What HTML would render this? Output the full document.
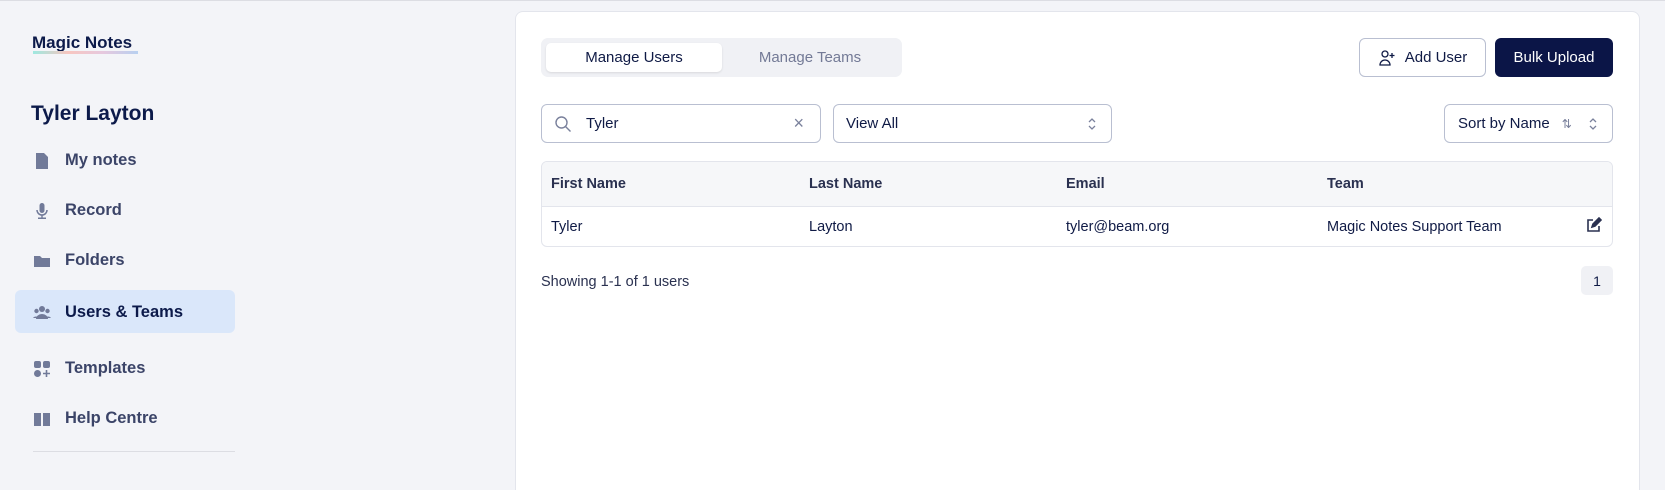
<!DOCTYPE html><html><head><style>
*{box-sizing:border-box;margin:0;padding:0}
html{width:1665px;height:490px;overflow:hidden}
body{width:1665px;height:490px;background:#f3f4f8;font-family:"Liberation Sans",sans-serif;color:#0f1a45;position:relative;overflow:hidden;border-top:1px solid #dcdde3}
.a{position:absolute}
.nav{position:absolute;left:33px;font-size:16.5px;font-weight:bold;color:#3b4468;display:flex;align-items:center}
.nav svg{width:18px;height:18px;margin-right:14px;fill:#717a99}
.box{position:absolute;border:1px solid #b9bfd1;border-radius:6px;background:#fff;font-size:15px;display:flex;align-items:center}
.th{position:absolute;top:175px;font-size:14.5px;font-weight:bold;color:#2a3150}
.td{position:absolute;top:218px;font-size:14.5px;color:#0f1a45}
</style></head><body>
<div class="a" style="left:32px;top:32px;font-size:17px;font-weight:bold;color:#0c1a4a">Magic Notes</div>
<div class="a" style="left:33px;top:50px;width:105px;height:3px;background:linear-gradient(90deg,#9ee8e0,#f7c6c0,#e6c8de,#b8d0f0)"></div>
<div class="a" style="left:31px;top:101px;font-size:21px;font-weight:bold;color:#0c1a4a">Tyler Layton</div>
<div class="a" style="left:15px;top:289px;width:220px;height:43px;background:#dae7fa;border-radius:6px"></div>
<div class="nav" style="top:150px"><svg viewBox="0 0 18 18"><path d="M3 1h8l4 4v12H3z"/></svg>My notes</div>
<div class="nav" style="top:200px"><svg viewBox="0 0 18 18"><rect x="6.5" y="1" width="5" height="10" rx="2.5"/><path d="M4 8a5 5 0 0010 0" stroke="#717a99" stroke-width="1.5" fill="none"/><rect x="8.3" y="13" width="1.4" height="3"/><rect x="5" y="15.5" width="8" height="1.5"/></svg>Record</div>
<div class="nav" style="top:250px"><svg viewBox="0 0 18 18"><path d="M1 4h6l2 2h8v9H1z"/></svg>Folders</div>
<div class="nav" style="top:302px;color:#0c1a4a"><svg viewBox="0 0 18 18"><circle cx="9" cy="5" r="3"/><circle cx="3.5" cy="7" r="2.2"/><circle cx="14.5" cy="7" r="2.2"/><path d="M3 15a6 5 0 0112 0z"/><path d="M0 14a3.5 3 0 016 0z"/><path d="M12 14a3.5 3 0 016 0z"/></svg>Users &amp; Teams</div>
<div class="nav" style="top:358px"><svg viewBox="0 0 18 18"><rect x="1" y="1" width="7" height="7" rx="2"/><rect x="10" y="1" width="7" height="7" rx="2"/><circle cx="4.5" cy="13.5" r="3.5"/><path d="M13.5 10v7M10 13.5h7" stroke="#717a99" stroke-width="1.6"/></svg>Templates</div>
<div class="nav" style="top:408px"><svg viewBox="0 0 18 18"><path d="M1 3h7v13H1zM10 3h7v13h-7z"/></svg>Help Centre</div>
<div class="a" style="left:33px;top:450px;width:202px;height:1px;background:#dcdde3"></div>

<div class="a" style="left:515px;top:10px;width:1125px;height:490px;background:#fff;border:1px solid #e3e5ec;border-bottom:none;border-radius:8px 8px 0 0"></div>
<div class="a" style="left:541px;top:37px;width:361px;height:39px;background:#f0f1f5;border-radius:7px"></div>
<div class="a" style="left:546px;top:42px;width:176px;height:29px;background:#fff;border-radius:5px;box-shadow:0 1px 2px rgba(0,0,0,.1);font-size:15px;display:flex;align-items:center;justify-content:center">Manage Users</div>
<div class="a" style="left:722px;top:42px;width:176px;height:29px;font-size:15px;color:#737a96;display:flex;align-items:center;justify-content:center">Manage Teams</div>
<div class="box" style="left:1359px;top:37px;width:127px;height:39px;justify-content:center"><svg width="18" height="18" viewBox="0 0 18 18" fill="none" stroke="#0f1a45" stroke-width="1.3" style="margin-right:9px"><circle cx="7" cy="5" r="3"/><path d="M2 16a5 5 0 0110 0z"/><path d="M14 4v5M11.5 6.5h5"/></svg>Add User</div>
<div class="a" style="left:1495px;top:37px;width:118px;height:39px;background:#0b1547;border-radius:6px;color:#fff;font-size:15px;display:flex;align-items:center;justify-content:center">Bulk Upload</div>
<div class="box" style="left:541px;top:103px;width:280px;height:39px"><svg width="18" height="18" viewBox="0 0 18 18" fill="none" stroke="#7a819c" stroke-width="1.4" style="margin-left:12px"><circle cx="7.5" cy="7.5" r="5.5"/><path d="M11.5 11.5l5 5"/></svg><span style="margin-left:14px">Tyler</span><span style="position:absolute;right:16px;color:#7a819c;font-size:18px">×</span></div>
<div class="box" style="left:833px;top:103px;width:279px;height:39px;padding-left:12px">View All<svg class="a" style="right:14px;top:12px" width="10" height="14" viewBox="0 0 10 14" fill="none" stroke="#7a819c" stroke-width="1.3"><path d="M2 5l3-3 3 3M2 9l3 3 3-3"/></svg></div>
<div class="box" style="left:1444px;top:103px;width:169px;height:39px;padding-left:13px">Sort by Name<span style="margin-left:12px;color:#7a819c;font-size:12px">⇅</span><svg class="a" style="right:14px;top:12px" width="10" height="14" viewBox="0 0 10 14" fill="none" stroke="#7a819c" stroke-width="1.3"><path d="M2 5l3-3 3 3M2 9l3 3 3-3"/></svg></div>
<div class="a" style="left:541px;top:160px;width:1072px;height:86px;border:1px solid #e3e5ec;border-radius:6px;overflow:hidden"><div style="height:45px;background:#f6f7f9;border-bottom:1px solid #e3e5ec"></div></div>
<div class="th" style="left:551px">First Name</div><div class="th" style="left:809px">Last Name</div><div class="th" style="left:1066px">Email</div><div class="th" style="left:1327px">Team</div>
<div class="td" style="left:551px">Tyler</div><div class="td" style="left:809px">Layton</div><div class="td" style="left:1066px">tyler@beam.org</div><div class="td" style="left:1327px">Magic Notes Support Team</div>
<svg class="a" style="left:1586px;top:216px" width="16" height="16" viewBox="0 0 16 16" fill="none" stroke="#2a3150" stroke-width="1.6"><path d="M7 3H2v11h11V9"/><path d="M6 10l1-3 6-6 2 2-6 6z" fill="#2a3150"/></svg>
<div class="a" style="left:541px;top:273px;font-size:14.5px;color:#2a3150">Showing 1-1 of 1 users</div>
<div class="a" style="left:1581px;top:265px;width:32px;height:29px;background:#f0f1f5;border-radius:5px;font-size:14px;display:flex;align-items:center;justify-content:center">1</div>
</body></html>
